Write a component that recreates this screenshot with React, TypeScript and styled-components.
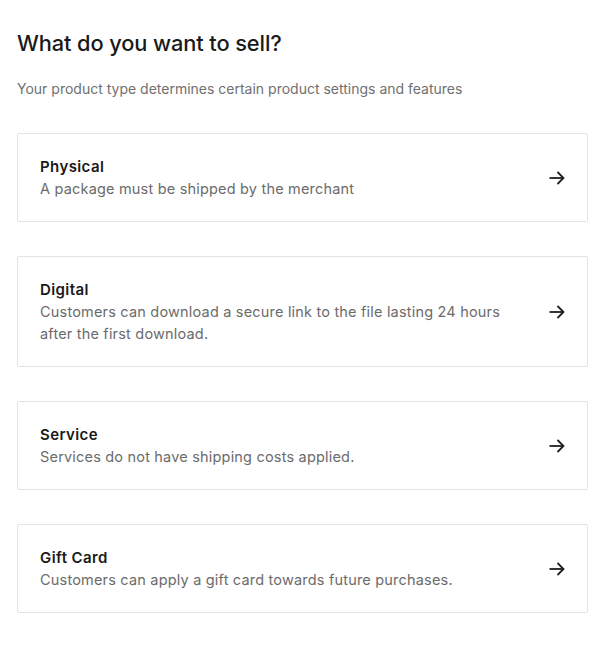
import styled, { createGlobalStyle } from "styled-components";

const GlobalStyle = createGlobalStyle`
  body {
    margin: 0;
    background: #ffffff;
    font-family: Inter, "Noto Sans", sans-serif;
  }
`;

interface ProductType {
  title: string;
  description: string;
}

const productTypes: ProductType[] = [
  { title: "Physical", description: "A package must be shipped by the merchant" },
  {
    title: "Digital",
    description:
      "Customers can download a secure link to the file lasting 24 hours after the first download.",
  },
  { title: "Service", description: "Services do not have shipping costs applied." },
  { title: "Gift Card", description: "Customers can apply a gift card towards future purchases." },
];

const Page = styled.div`
  padding: 28px 26px 36px 17px;
`;

const Heading = styled.h1`
  margin: 0;
  font-size: 21.8px;
  line-height: 30px;
  font-weight: 500;
  color: #1a1a1a;
  letter-spacing: -0.1px;
`;

const Subtitle = styled.p`
  margin: 21px 0 0;
  font-size: 14px;
  line-height: 20px;
  color: #707070;
`;

const List = styled.div`
  margin-top: 34px;
  display: flex;
  flex-direction: column;
  gap: 34px;
`;

const Card = styled.button`
  display: flex;
  align-items: center;
  justify-content: space-between;
  gap: 24px;
  width: 100%;
  padding: 22px 21px 21px 22px;
  background: #ffffff;
  border: 1px solid #e3e3e3;
  border-radius: 2px;
  text-align: left;
  font-family: inherit;
  cursor: pointer;
`;

const CardText = styled.div`
  display: flex;
  flex-direction: column;
  max-width: 470px;
`;

const CardTitle = styled.span`
  font-size: 15px;
  line-height: 22px;
  font-weight: 600;
  letter-spacing: 0.4px;
  color: #1a1a1a;
`;

const CardDescription = styled.span`
  font-size: 14.5px;
  line-height: 22px;
  color: #6b6b6b;
  letter-spacing: 0.19px;
`;

const Arrow = () => (
  <svg width="18" height="18" viewBox="0 0 18 18" fill="none" stroke="#1f1f1f" strokeWidth="1.8">
    <path d="M1.5 9h14" />
    <path d="M9.5 3l6 6-6 6" />
  </svg>
);

export default function App() {
  return (
    <>
      <GlobalStyle />
      <Page>
        <Heading>What do you want to sell?</Heading>
        <Subtitle>Your product type determines certain product settings and features</Subtitle>
        <List>
          {productTypes.map((type) => (
            <Card key={type.title}>
              <CardText>
                <CardTitle>{type.title}</CardTitle>
                <CardDescription>{type.description}</CardDescription>
              </CardText>
              <Arrow />
            </Card>
          ))}
        </List>
      </Page>
    </>
  );
}
